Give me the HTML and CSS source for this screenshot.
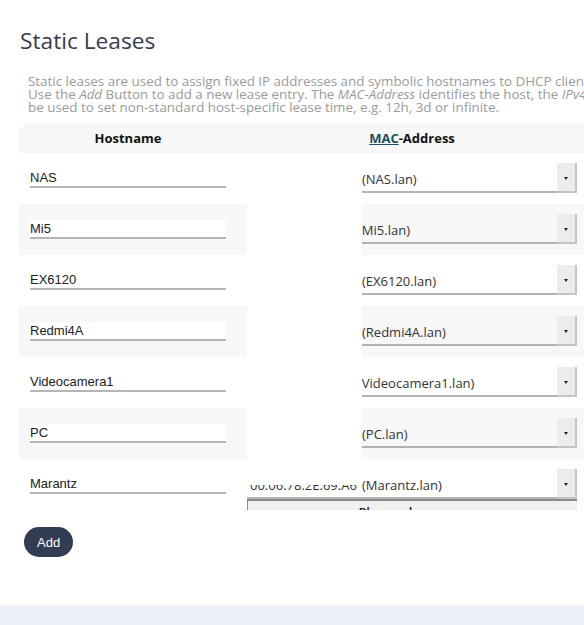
FILE: index.html
```html
<!DOCTYPE html>
<html>
<head>
<meta charset="utf-8">
<title>Static Leases</title>
<link rel="stylesheet" href="styles.css">
</head>
<body>
<div class="page">
  <div class="main">
    <h2 class="title">Static Leases</h2>
    <div class="desc">
      <div class="desc-line">Static leases are used to assign fixed IP addresses and symbolic hostnames to DHCP clients. They are also required for non-dynamic interface configurations where only hosts with a corresponding lease are served.</div>
      <div class="desc-line">Use the <em>Add</em> Button to add a new lease entry. The <em>MAC-Address</em> identifies the host, the <em>IPv4-Address</em> specifies the fixed address to use, and the <em>Hostname</em> is assigned as a symbolic name to the requesting host. The optional <em>Lease time</em> can</div>
      <div class="desc-line">be used to set non-standard host-specific lease time, e.g. 12h, 3d or infinite.</div>
    </div>

    <div class="table">
      <div class="thead">
        <div class="th th-host">Hostname</div>
        <div class="th th-mac"><a class="abbr">MAC</a>-Address</div>
      </div>

      <div class="row">
        <div class="cell-host"><input class="input" type="text" value="NAS"></div>
        <div class="cell-mac">
          <div class="select"><div class="select-text"><span class="mac">00:11:32:8A:4C:10 </span>(NAS.lan)</div><div class="select-btn"><span class="caret"></span></div></div>
        </div>
      </div>

      <div class="row row-alt">
        <div class="cell-host"><input class="input" type="text" value="Mi5"></div>
        <div class="cell-mac">
          <div class="select"><div class="select-text"><span class="mac mac-short">64:B4:73:1D:9E:02 </span>(Mi5.lan)</div><div class="select-btn"><span class="caret"></span></div></div>
        </div>
      </div>

      <div class="row">
        <div class="cell-host"><input class="input" type="text" value="EX6120"></div>
        <div class="cell-mac">
          <div class="select"><div class="select-text"><span class="mac">C4:04:15:6B:22:A8 </span>(EX6120.lan)</div><div class="select-btn"><span class="caret"></span></div></div>
        </div>
      </div>

      <div class="row row-alt">
        <div class="cell-host"><input class="input" type="text" value="Redmi4A"></div>
        <div class="cell-mac">
          <div class="select"><div class="select-text"><span class="mac">28:E3:1F:0C:57:B9 </span>(Redmi4A.lan)</div><div class="select-btn"><span class="caret"></span></div></div>
        </div>
      </div>

      <div class="row">
        <div class="cell-host"><input class="input" type="text" value="Videocamera1"></div>
        <div class="cell-mac">
          <div class="select"><div class="select-text"><span class="mac mac-short">E0:50:8B:3A:71:C6 </span>(Videocamera1.lan)</div><div class="select-btn"><span class="caret"></span></div></div>
        </div>
      </div>

      <div class="row row-alt">
        <div class="cell-host"><input class="input" type="text" value="PC"></div>
        <div class="cell-mac">
          <div class="select"><div class="select-text"><span class="mac">30:9C:23:4F:E1:05 </span>(PC.lan)</div><div class="select-btn"><span class="caret"></span></div></div>
        </div>
      </div>

      <div class="row">
        <div class="cell-host"><input class="input" type="text" value="Marantz"></div>
        <div class="cell-mac">
          <div class="select"><div class="select-text"><span class="mac">00:06:78:2E:69:A6 </span>(Marantz.lan)</div><div class="select-btn"><span class="caret"></span></div></div>
          <div class="choose">Please choose</div>
        </div>
      </div>

      <div class="overlay"></div>
    </div>

    <div class="actions">
      <button class="btn-add" type="button">Add</button>
    </div>
  </div>
  <div class="footer"></div>
</div>
</body>
</html>
```

FILE: styles.css
```css
html, body {
  margin: 0;
  padding: 0;
  overflow: hidden;
}

body {
  width: 584px;
  height: 625px;
  background: #ffffff;
  font-family: "Open Sans", "Noto Sans", sans-serif;
}

.page {
  display: flex;
  flex-direction: column;
  height: 625px;
}

.main {
  flex: 0 0 606px;
  box-sizing: border-box;
  padding: 26px 0 0 19px;
  overflow: hidden;
}

.title {
  margin: 0;
  padding-left: 1px;
  font-size: 22.7px;
  line-height: 30px;
  font-weight: 400;
  color: #353d4d;
}

.desc {
  margin-top: 19px;
  padding-left: 9px;
  font-size: 13.4px;
  line-height: 13px;
  color: #9a9a9a;
  white-space: nowrap;
}

.table {
  position: relative;
  margin-top: 9px;
  width: 900px;
}

.thead {
  display: flex;
  height: 30px;
  background: #f7f7f7;
  border-top-left-radius: 10px;
}

.th {
  font-size: 13px;
  font-weight: 700;
  line-height: 30px;
  color: #111111;
  text-align: center;
}

.th-host {
  width: 218px;
  padding-right: 10px;
}

.th-mac {
  width: 330px;
}

.abbr {
  color: #1d4f64;
  text-decoration: underline;
}

.row {
  display: flex;
  height: 51px;
  overflow: hidden;
}

.row-alt {
  background: #f7f7f7;
}

.cell-host {
  width: 196px;
  padding: 16px 21px 0 11px;
}

.cell-mac {
  width: 330px;
  padding-top: 10px;
}

.input {
  display: block;
  width: 196px;
  height: 17px;
  margin: 0;
  padding: 0;
  border: 0;
  border-bottom: 2px solid #b5b5b5;
  background: #ffffff;
  font-family: "Liberation Sans", Arial, sans-serif;
  font-size: 13px;
  color: #222222;
  outline: none;
}

.select {
  display: flex;
  height: 30px;
}

.select-text {
  flex: 1;
  padding: 5px 0 0 3px;
  line-height: 23px;
  border-bottom: 2px solid #b3b3b3;
  font-size: 13px;
  color: #333333;
  white-space: nowrap;
  overflow: hidden;
}

.mac {
  display: inline-block;
  width: 112px;
  white-space: pre;
}

.mac-short {
  width: 108px;
}

.select-btn {
  box-sizing: border-box;
  width: 20px;
  height: 30px;
  padding-top: 2px;
  background: #ececec;
  border-right: 2px solid #c4c4c4;
  border-bottom: 2px solid #c4c4c4;
  display: flex;
  align-items: center;
  justify-content: center;
}

.caret {
  width: 0;
  height: 0;
  border-top: 3px solid #222222;
  border-left: 2.5px solid transparent;
  border-right: 2.5px solid transparent;
}

.choose {
  height: 30px;
  border-top: 2px solid #8a8a8a;
  border-left: 1px solid #8a8a8a;
  background: #f0f0f0;
  padding-right: 20px;
  line-height: 23px;
  font-size: 13px;
  font-weight: 600;
  text-align: center;
  color: #222222;
}

.overlay {
  position: absolute;
  left: 228px;
  top: 37px;
  width: 115px;
  height: 325px;
  background: #ffffff;
}

.actions {
  margin-top: 17px;
  padding-left: 5px;
}

.btn-add {
  height: 30px;
  padding: 0 13px;
  border: 0;
  border-radius: 15px;
  background: #323c52;
  color: #ffffff;
  font-family: "Liberation Sans", Arial, sans-serif;
  font-size: 13px;
  cursor: pointer;
}

.footer {
  flex: 1;
  background: #eceff5;
  box-shadow: 0 -1px 3px rgba(0, 0, 0, 0.04);
}
```
